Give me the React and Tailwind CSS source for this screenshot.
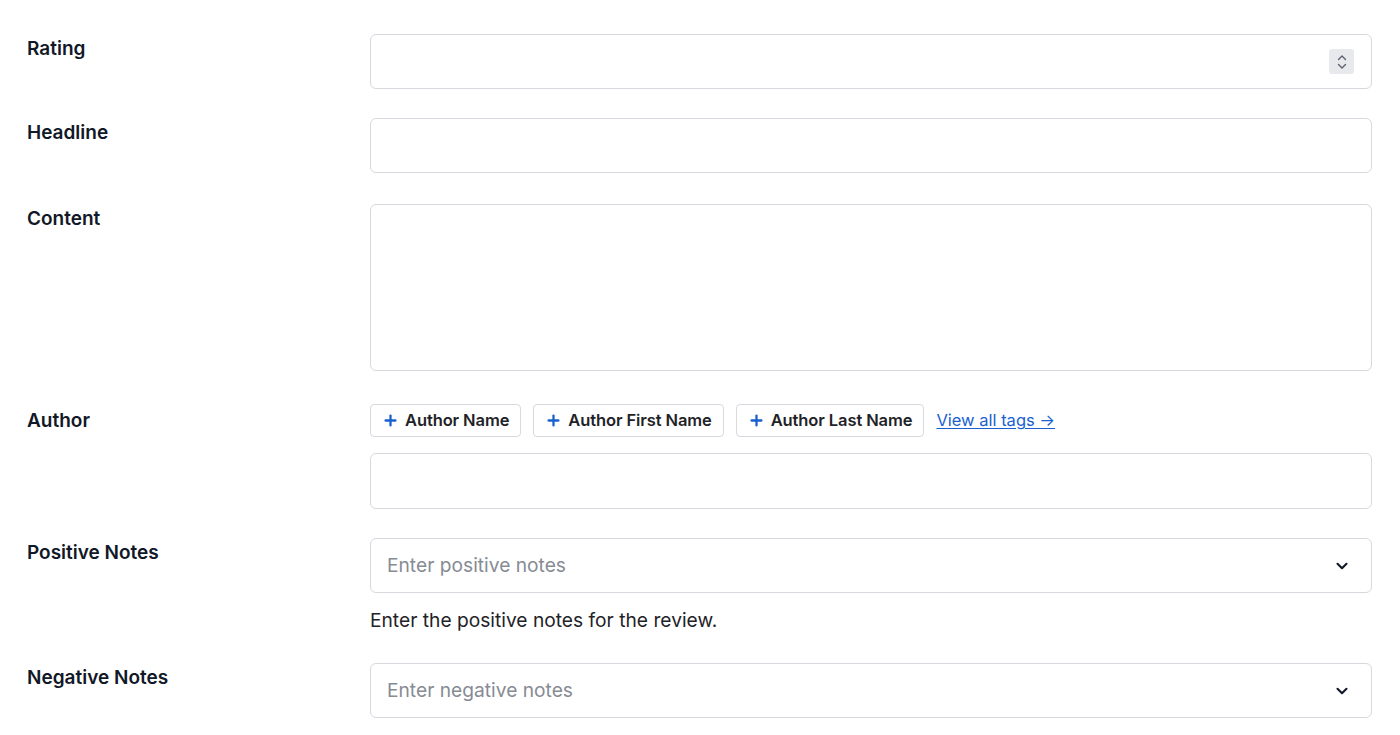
import { ChevronDown, Plus } from "lucide-react";

const inputBox =
  "h-[55px] w-full rounded-[6px] border border-[#d6d9de] bg-white";

function Label({ children }) {
  return (
    <div className="pt-[1px] text-[19px] font-semibold text-[#111827] leading-[28px]">
      {children}
    </div>
  );
}

function Spinner() {
  return (
    <div className="flex h-[25px] w-[25px] flex-col items-center justify-center rounded-[3px] bg-[#e8e9ec]">
      <svg width="12" height="18" viewBox="0 0 12 18" fill="none" stroke="#5b6270" strokeWidth="1.4" strokeLinecap="round" strokeLinejoin="round">
        <path d="M2.5 6.5 6 3l3.5 3.5" />
        <path d="M2.5 11.5 6 15l3.5-3.5" />
      </svg>
    </div>
  );
}

function Tag({ children }) {
  return (
    <button className="flex h-[33px] items-center gap-[6px] rounded-[4px] border border-[#d6d9de] bg-white pl-[11px] pr-[11px] text-[16.5px] font-semibold tracking-[-0.1px] text-[#1f2328]">
      <Plus size={17} strokeWidth={3.2} className="text-[#1a5fd0]" />
      {children}
    </button>
  );
}

function SelectBox({ placeholder }) {
  return (
    <div className={`${inputBox} flex items-center justify-between pl-[16px] pr-[20px]`}>
      <span className="text-[19.2px] text-[#868b94]">{placeholder}</span>
      <ChevronDown size={18} strokeWidth={2.8} className="text-[#111827]" />
    </div>
  );
}

export default function App() {
  return (
    <div
      className="min-h-[735px] bg-white pl-[27px] pr-[28px] pt-[34px]"
      style={{ fontFamily: "Inter, 'Noto Sans', sans-serif" }}
    >
      <div className="grid grid-cols-[343px_1fr]">
        <Label>Rating</Label>
        <div className={`${inputBox} flex items-center justify-end pr-[17px]`}>
          <Spinner />
        </div>

        <div className="col-span-2 h-[29px]" />

        <Label>Headline</Label>
        <div className={inputBox} />

        <div className="col-span-2 h-[31px]" />

        <Label>Content</Label>
        <div className="h-[167px] w-full rounded-[6px] border border-[#d6d9de] bg-white" />

        <div className="col-span-2 h-[33px]" />

        <div className="text-[19px] font-semibold leading-[33px] text-[#111827]">Author</div>
        <div className="flex flex-col gap-[16px]">
          <div className="flex items-center gap-[12px]">
            <Tag>Author Name</Tag>
            <Tag>Author First Name</Tag>
            <Tag>Author Last Name</Tag>
            <a href="#" className="text-[16.5px] text-[#1a5fd0] underline underline-offset-2">
              View all tags →
            </a>
          </div>
          <div className={`${inputBox} h-[56px]`} />
        </div>

        <div className="col-span-2 h-[29px]" />

        <Label>Positive Notes</Label>
        <div className="flex flex-col">
          <SelectBox placeholder="Enter positive notes" />
          <p className="mt-[13px] text-[19.2px] leading-[28px] text-[#1f2328]">
            Enter the positive notes for the review.
          </p>
        </div>

        <div className="col-span-2 h-[29px]" />

        <Label>Negative Notes</Label>
        <SelectBox placeholder="Enter negative notes" />
      </div>
    </div>
  );
}
